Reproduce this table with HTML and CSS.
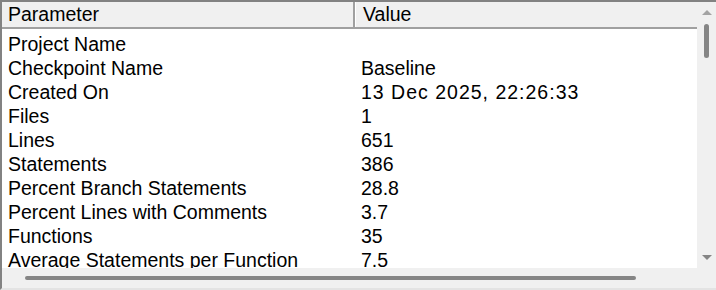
FILE: index.html
```html
<!DOCTYPE html>
<html lang="en">
<head>
    <meta charset="UTF-8">
    <title>Checkpoint Metrics</title>
    <link rel="stylesheet" href="styles.css">
</head>
<body>
    <div class="grid">
        <div class="main">
            <div class="header">
                <div class="col-param">Parameter</div>
                <div class="col-value">Value</div>
            </div>
            <div class="rows">
                <div class="row"><div class="col-param">Project Name</div><div class="col-value"></div></div>
                <div class="row"><div class="col-param">Checkpoint Name</div><div class="col-value">Baseline</div></div>
                <div class="row"><div class="col-param">Created On</div><div class="col-value date">13 Dec 2025, 22:26:33</div></div>
                <div class="row"><div class="col-param">Files</div><div class="col-value">1</div></div>
                <div class="row"><div class="col-param">Lines</div><div class="col-value">651</div></div>
                <div class="row"><div class="col-param">Statements</div><div class="col-value">386</div></div>
                <div class="row"><div class="col-param">Percent Branch Statements</div><div class="col-value">28.8</div></div>
                <div class="row"><div class="col-param">Percent Lines with Comments</div><div class="col-value">3.7</div></div>
                <div class="row"><div class="col-param">Functions</div><div class="col-value">35</div></div>
                <div class="row"><div class="col-param">Average Statements per Function</div><div class="col-value">7.5</div></div>
            </div>
        </div>
        <!-- vertical scrollbar -->
        <div class="vscroll">
            <span class="arrow-up"></span>
            <span class="vthumb"></span>
            <span class="spacer"></span>
            <span class="arrow-down"></span>
        </div>
        <!-- horizontal scrollbar -->
        <div class="hscroll">
            <span class="hthumb"></span>
        </div>
        <div class="corner"></div>
    </div>
</body>
</html>
```

FILE: styles.css
```css
body {
    margin: 0;
    font-family: "Liberation Sans", Arial, sans-serif;
    font-size: 19.5px;
    color: #000;
    background: #f0f0f0;
}
.grid {
    width: 716px;
    height: 290px;
    box-sizing: border-box;
    border-left: 2px solid #828282;
    border-top: 2px solid #828282;
    border-bottom: 2px solid #e3e3e3;
    display: grid;
    grid-template-columns: 1fr 19px;
    grid-template-rows: 1fr 20px;
}
.main {
    background: #fff;
    overflow: hidden;
}
.header {
    display: flex;
    height: 25px;
    background: #f0f0f0;
    border-bottom: 2px solid #a0a0a0;
    line-height: 25px;
}
.header .col-param {
    border-right: 2px solid #a0a0a0;
    box-shadow: 1px 0 0 #fff;
}
.col-param {
    width: 345px;
    padding-left: 6px;
    flex-shrink: 0;
    white-space: nowrap;
}
.col-value {
    padding-left: 8px;
    white-space: nowrap;
}
.date {
    letter-spacing: 1px;
}
.rows {
    padding-top: 3px;
}
.row {
    display: flex;
    height: 24px;
    line-height: 24px;
}
.vscroll {
    background: #f0f0f0;
    display: flex;
    flex-direction: column;
    align-items: center;
}
.arrow-up {
    margin-top: 8px;
    border-left: 5px solid transparent;
    border-right: 5px solid transparent;
    border-bottom: 5px solid #a3a3a3;
}
.vthumb {
    margin-top: 9px;
    width: 5px;
    height: 34px;
    border-radius: 3px;
    background: #858585;
}
.spacer {
    flex: 1;
}
.arrow-down {
    margin-bottom: 8px;
    border-left: 5px solid transparent;
    border-right: 5px solid transparent;
    border-top: 5px solid #858585;
}
.hscroll {
    background: #f0f0f0;
    display: flex;
    align-items: center;
    padding-left: 23px;
}
.hthumb {
    width: 611px;
    height: 4px;
    border-radius: 2px;
    background: #858585;
}
.corner {
    background: #f0f0f0;
}
```
